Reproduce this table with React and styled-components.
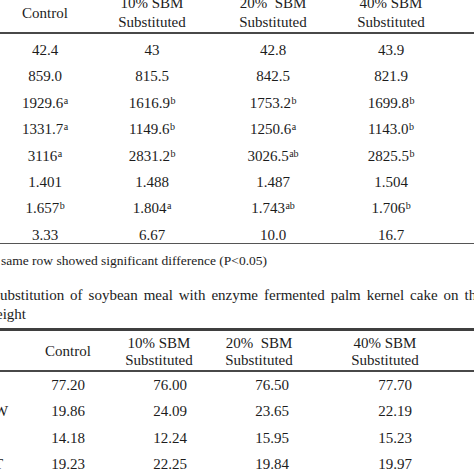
import React from 'react';
import styled, { createGlobalStyle } from 'styled-components';

const GlobalStyle = createGlobalStyle`
  html, body { margin: 0; padding: 0; background: #fff; }
`;

const Page = styled.div`
  width: 474px;
  height: 474px;
  overflow: hidden;
  background: #fff;
  color: #1c1c1c;
  font-family: "Liberation Serif", "Times New Roman", serif;
  font-size: 15px;
`;

const Sheet = styled.div`
  margin-top: -6px;
`;

const Table = styled.div`
  border-top: ${p => (p.$ruled ? '3.5px solid #3f3f3f' : 'none')};
  border-bottom: ${p => (p.$closed ? '1.5px solid #555' : 'none')};
`;

const HeadRow = styled.div`
  display: grid;
  grid-template-columns: ${p => p.$cols};
  align-items: center;
  height: ${p => p.$h}px;
  padding-top: ${p => p.$pad || 0}px;
  line-height: ${p => p.$lh}px;
  border-bottom: 2px solid #484848;
`;

const HeadCell = styled.div`
  text-align: center;
  white-space: nowrap;
`;

const DataRow = styled.div`
  display: grid;
  grid-template-columns: ${p => p.$cols};
  align-items: start;
  height: ${p => p.$h}px;
  line-height: 18px;
  &:last-child { height: ${p => p.$h - 2}px; }
`;

const Cell = styled.div`
  padding-top: ${p => p.$top}px;
  padding-left: ${p => p.$shift || 0}px;
  text-align: center;
  white-space: nowrap;
`;

const Label = styled.div`
  padding-top: ${p => p.$top}px;
  margin-left: -6px;
  white-space: nowrap;
`;

const Sup = styled.sup`
  font-size: 10px;
  line-height: 1;
  vertical-align: top;
  position: relative;
  top: 2px;
  margin-left: 0.5px;
`;

const Note = styled.p`
  margin: 9px 0 0 1px;
  font-size: 13.5px;
  line-height: 16px;
  white-space: nowrap;
`;

const Caption = styled.p`
  margin: 17px 0 0 0;
  line-height: 19px;
  white-space: nowrap;
  word-spacing: 2.2px;
`;

const CaptionTail = styled.span`
  display: block;
  margin-left: -4px;
  word-spacing: 0;
`;

const SecondTable = styled(Table)`
  margin-top: 4px;
`;

const topCols = '90px 124px 118px 118px';
const botCols = '40px 56px 126px 74px 178px';

const topRows = [
  [['42.4'], ['43'], ['42.8'], ['43.9']],
  [['859.0'], ['815.5'], ['842.5'], ['821.9']],
  [['1929.6', 'a'], ['1616.9', 'b'], ['1753.2', 'b'], ['1699.8', 'b']],
  [['1331.7', 'a'], ['1149.6', 'b'], ['1250.6', 'a'], ['1143.0', 'b']],
  [['3116', 'a'], ['2831.2', 'b'], ['3026.5', 'ab'], ['2825.5', 'b']],
  [['1.401'], ['1.488'], ['1.487'], ['1.504']],
  [['1.657', 'b'], ['1.804', 'a'], ['1.743', 'ab'], ['1.706', 'b']],
  [['3.33'], ['6.67'], ['10.0'], ['16.7']],
];

const botRows = [
  ['', ['77.20', '76.00', '76.50', '77.70']],
  ['W', ['19.86', '24.09', '23.65', '22.19']],
  ['', ['14.18', '12.24', '15.95', '15.23']],
  ['T', ['19.23', '22.25', '19.84', '19.97']],
];

const botShift = [0, 22, 26, 20];

function Header({ cols, h, lh, pad, lead }) {
  return (
    <HeadRow $cols={cols} $h={h} $lh={lh} $pad={pad}>
      {lead && <div />}
      <HeadCell>Control</HeadCell>
      <HeadCell>10% SBM<br />Substituted</HeadCell>
      <HeadCell>20%&nbsp; SBM<br />Substituted</HeadCell>
      <HeadCell>40% SBM<br />Substituted</HeadCell>
    </HeadRow>
  );
}

export default function App() {
  return (
    <Page>
      <GlobalStyle />
      <Sheet>
        <Table $closed>
          <Header cols={topCols} h={38} lh={19} />
          {topRows.map((row, i) => (
            <DataRow key={i} $cols={topCols} $h={26.4}>
              {row.map(([v, s], j) => (
                <Cell key={j} $top={7}>
                  {v}
                  {s && <Sup>{s}</Sup>}
                </Cell>
              ))}
            </DataRow>
          ))}
        </Table>

        <Note>same row showed significant difference (P&lt;0.05)</Note>

        <Caption>
          ubstitution of soybean meal with enzyme fermented palm kernel cake on the
          <CaptionTail>eight</CaptionTail>
        </Caption>

        <SecondTable $ruled>
          <Header cols={botCols} h={37} lh={17} pad={2} lead />
          {botRows.map(([label, vals], i) => (
            <DataRow key={i} $cols={botCols} $h={26.3}>
              <Label $top={4}>{label}</Label>
              {vals.map((v, j) => (
                <Cell key={j} $top={4} $shift={botShift[j]}>{v}</Cell>
              ))}
            </DataRow>
          ))}
        </SecondTable>
      </Sheet>
    </Page>
  );
}
